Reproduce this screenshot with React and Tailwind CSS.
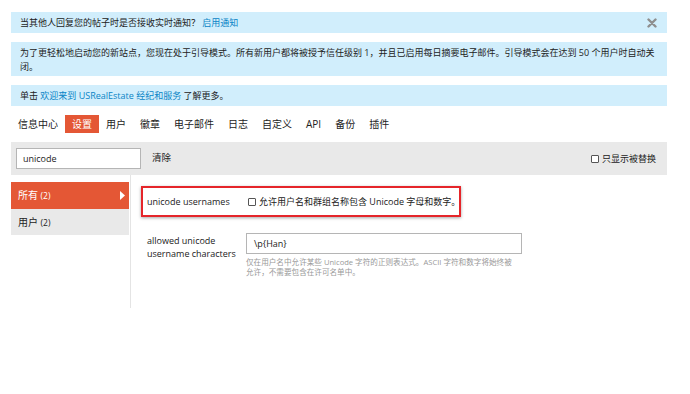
import { useState } from "react";

const font = { fontFamily: "'Open Sans', 'Noto Sans CJK SC', sans-serif" };

function Checkbox() {
  return <span className="inline-block w-[8px] h-[8px] border border-[#555] rounded-[1px] bg-white shrink-0" />;
}

export default function App() {
  const [tab] = useState("设置");
  const tabs = ["信息中心", "设置", "用户", "徽章", "电子邮件", "日志", "自定义", "API", "备份", "插件"];

  return (
    <div className="w-[690px] h-[394px] bg-white text-[#222] overflow-hidden" style={font}>
      <div className="ml-[11px] w-[656px] pt-[12px]">

        {/* Notices */}
        <div className="bg-[#d1eefc] h-[21px] pl-[9px] pr-[10px] flex items-center justify-between text-[9px]">
          <span>
            当其他人回复您的帖子时是否接收实时通知？ <span className="text-[#0a84c6]">启用通知</span>
          </span>
          <svg width="10" height="10" viewBox="0 0 10 10">
            <path d="M1.5 1.5 L8.5 8.5 M8.5 1.5 L1.5 8.5" stroke="#8f8f8f" strokeWidth="2.4" strokeLinecap="round" />
          </svg>
        </div>

        <div className="mt-[9px] bg-[#d1eefc] h-[34px] pl-[9px] pr-[10px] pt-[4px] text-[9px] leading-[14px]">
          为了更轻松地启动您的新站点，您现在处于引导模式。所有新用户都将被授予信任级别 1，并且已启用每日摘要电子邮件。引导模式会在达到 50 个用户时自动关<br />闭。
        </div>

        <div className="mt-[9px] bg-[#d1eefc] h-[21px] pl-[9px] flex items-center text-[9px]">
          <span>
            单击 <span className="text-[#0a84c6]">欢迎来到 USRealEstate 经纪和服务</span> 了解更多。
          </span>
        </div>

        {/* Nav tabs */}
        <div className="mt-[9px] flex h-[18px] text-[10px]">
          {tabs.map((t) => (
            <div
              key={t}
              className={
                t === tab
                  ? "px-[7px] flex items-center bg-[#e45735] text-white"
                  : "px-[7px] flex items-center text-[#222]"
              }
            >
              {t}
            </div>
          ))}
        </div>

        {/* Filter bar */}
        <div className="mt-[9px] bg-[#e9e9e9] h-[33px] flex items-center pl-[5px] pr-[11px]">
          <div className="w-[125px] h-[21px] bg-white border border-[#b5b5b5] flex items-center pl-[6px] text-[9px]">
            unicode
          </div>
          <span className="ml-[11px] text-[9.5px]">清除</span>
          <div className="ml-auto flex items-center gap-[3px] text-[9px]">
            <Checkbox />
            <span>只显示被替换</span>
          </div>
        </div>

        {/* Main */}
        <div className="flex">
          <div className="w-[118px] pt-[7px]">
            <div className="h-[27px] bg-[#e45735] text-white flex items-center justify-between pl-[7px] pr-[4px]">
              <span className="text-[10px]">
                所有 <span className="text-[8.5px]">(2)</span>
              </span>
              <svg width="5" height="9" viewBox="0 0 5 9">
                <path d="M0 0 L5 4.5 L0 9 Z" fill="white" />
              </svg>
            </div>
            <div className="h-[26px] bg-[#e9e9e9] flex items-center pl-[7px] text-[10px]">
              <span>
                用户 <span className="text-[8.5px]">(2)</span>
              </span>
            </div>
          </div>

          <div className="ml-[1px] border-l border-[#e4e4e4] h-[133px] pl-[10px] pt-[11px]">
            <div className="w-[320px] h-[31px] border-2 border-[#e5252a] shadow-[0_1px_3px_rgba(0,0,0,0.35)] flex items-center pl-[4px]">
              <div className="w-[101px] shrink-0 text-[9px]">unicode usernames</div>
              <div className="flex items-center gap-[3px] text-[9px] whitespace-nowrap">
                <Checkbox />
                <span>允许用户名和群组名称包含 Unicode 字母和数字。</span>
              </div>
            </div>

            <div className="mt-[16px] flex pl-[6px]">
              <div className="w-[99px] shrink-0 text-[9px] leading-[13px] pt-[1px]">
                allowed unicode<br />username characters
              </div>
              <div>
                <div className="w-[276px] h-[21px] border border-[#b5b5b5] bg-white flex items-center pl-[7px] text-[9px]">
                  \p{"{"}Han{"}"}
                </div>
                <div className="mt-[3px] text-[7.6px] leading-[10px] text-[#999] whitespace-nowrap">
                  仅在用户名中允许某些 Unicode 字符的正则表达式。ASCII 字符和数字将始终被<br />
                  允许，不需要包含在许可名单中。
                </div>
              </div>
            </div>
          </div>
        </div>

      </div>
    </div>
  );
}
